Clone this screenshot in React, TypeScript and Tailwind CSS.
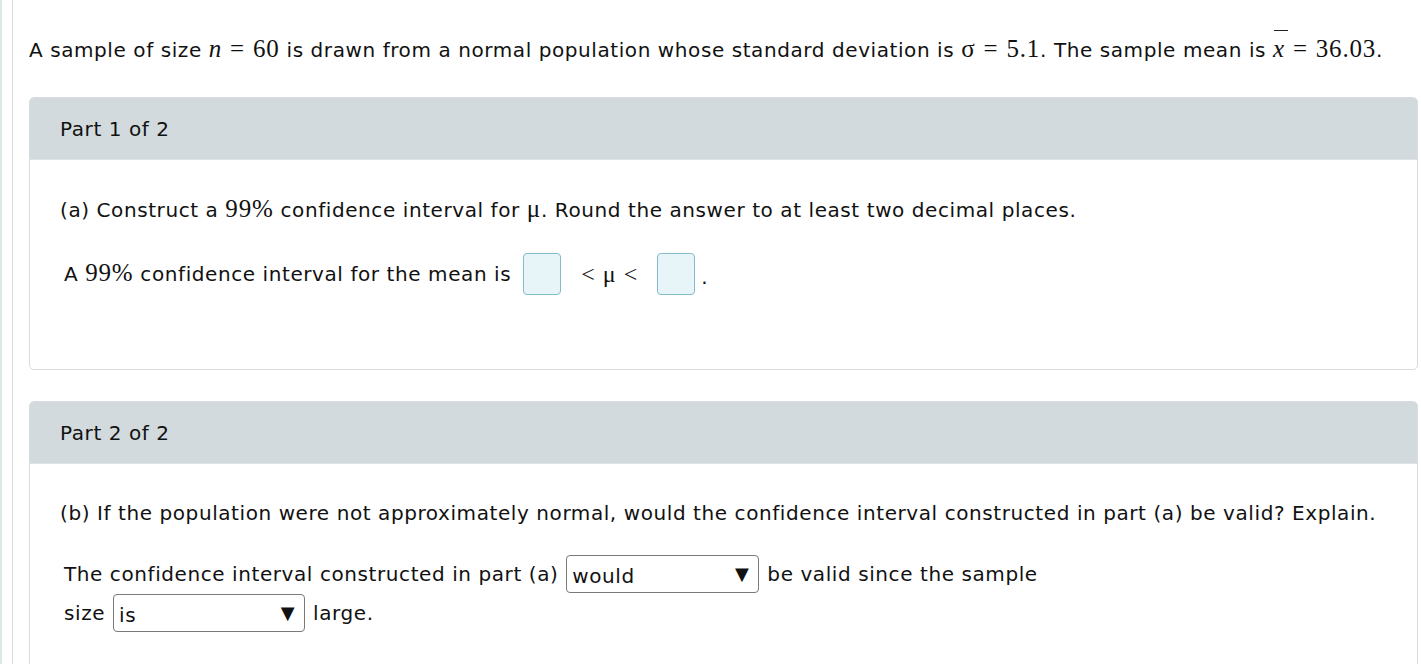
import type { ReactNode } from "react"

function M({ children }: { children: ReactNode }) {
	return (
		<span className="font-['Liberation_Serif','Times_New_Roman',serif] text-[25px] leading-none tracking-[0.8px]">
			{children}
		</span>
	)
}

function Eq() {
	return <span className="mx-[8px]">=</span>
}

function AnswerBox() {
	return <span className="inline-block h-[42px] w-[38px] rounded-[4px] border border-[#84bccb] bg-[#e7f4f8]" />
}

function Select({ value, width }: { value: string; width: string }) {
	return (
		<span
			className={`flex h-[38px] ${width} items-center justify-between rounded-[4px] border border-[#7a7a7a] bg-white pl-[5px] pr-[9px]`}
		>
			<span className="mt-[4px]">{value}</span>
			<span className="text-[18px]">▼</span>
		</span>
	)
}

function Card({ title, children }: { title: string; children: ReactNode }) {
	return (
		<div className="overflow-hidden rounded-[5px] border border-[#d6dcdf] bg-white">
			<div className="flex h-[62px] items-center border-b border-[#dde2e4] bg-[#d3dadd] pl-[30px]">{title}</div>
			<div className="pl-[30px]">{children}</div>
		</div>
	)
}

export default function App() {
	return (
		<div className="flex h-[664px] overflow-hidden bg-white font-['DejaVu_Sans',Verdana,sans-serif] text-[20px] leading-[28px] tracking-[0.58px] text-[#111]">
			<div className="w-[2px] bg-[#dce8e2]" />
			<div className="w-[10px]" />
			<div className="w-px bg-[#d8dcdc]" />
			<div className="flex-1 pl-[16px] pr-[3px]">
				<p className="pt-[36px]">
					A sample of size{" "}
					<M>
						<i>n</i>
						<Eq />
						60
					</M>{" "}
					is drawn from a normal population whose standard deviation is{" "}
					<M>
						σ<Eq />
						5.1
					</M>
					. The sample mean is{" "}
					<M>
						<span className="relative italic">
							x<span className="absolute left-[1px] right-[-3px] top-[-5px] h-px bg-[#222]" />
						</span>
						<Eq />
						36.03
					</M>
					.
				</p>

				<div className="mt-[33px]">
					<Card title="Part 1 of 2">
						<p className="pt-[36px]">
							(a) Construct a <M>99%</M> confidence interval for <M>μ</M>. Round the answer to at least two decimal
							places.
						</p>
						<div className="ml-[4px] mt-[29px] flex h-[42px] items-center">
							<span>
								A <M>99%</M> confidence interval for the mean is
							</span>
							<span className="ml-[12px] flex">
								<AnswerBox />
							</span>
							<span className="mx-[20px] flex gap-[8px] font-['Liberation_Serif',serif] text-[24px] tracking-normal">
								<span>&lt;</span>
								<span>μ</span>
								<span>&lt;</span>
							</span>
							<AnswerBox />
							<span className="ml-[6px] self-end pb-[4px]">.</span>
						</div>
						<div className="h-[74px]" />
					</Card>
				</div>

				<div className="mt-[31px]">
					<Card title="Part 2 of 2">
						<p className="pt-[35px]">
							(b) If the population were not approximately normal, would the confidence interval constructed in part (a)
							be valid? Explain.
						</p>
						<div className="ml-[4px] mt-[28px] flex flex-col gap-[1px] pb-[40px]">
							<div className="flex items-center gap-[8px]">
								<span>The confidence interval constructed in part (a)</span>
								<Select value="would" width="w-[193px]" />
								<span>be valid since the sample</span>
							</div>
							<div className="flex items-center gap-[8px]">
								<span>size</span>
								<Select value="is" width="w-[192px]" />
								<span>large.</span>
							</div>
						</div>
					</Card>
				</div>
			</div>
		</div>
	)
}
